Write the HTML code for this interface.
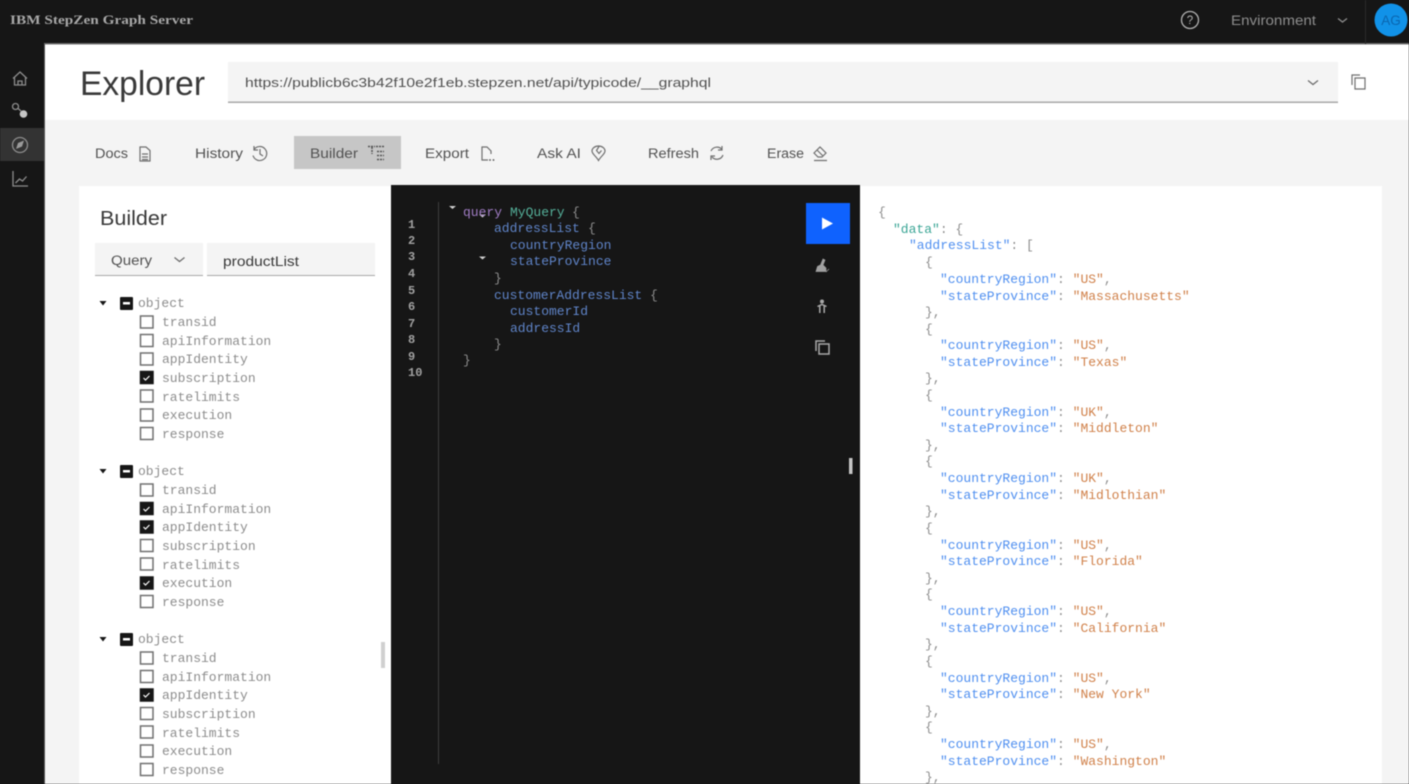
<!DOCTYPE html>
<html><head><meta charset="utf-8"><style>
html,body{margin:0;padding:0;width:1409px;height:784px;overflow:hidden;background:#161616}
svg{display:block;filter:blur(.6px)}
.s{font-family:"Liberation Sans",sans-serif}
.m{font-family:"Liberation Mono",monospace;font-size:13px}
.n{fill:#a0a0a0;font-weight:bold;font-size:12px}
.k{fill:#8d8d8d}
.kw{fill:#a07cc4}.nm{fill:#55b09a}.f{fill:#5f84c8}.b{fill:#8d8d8d}
.jk{fill:#4f8ff0}.js{fill:#d0814a}.jb{fill:#8d8d8d}.jd{fill:#3aa595}
.t{font-size:13.500px;fill:#525252;font-family:"Liberation Sans",sans-serif}
.ic{fill:none;stroke:#6f6f6f;stroke-width:1.200}
.sb{fill:none;stroke:#8d8d8d;stroke-width:1.300}
.ed{fill:none;stroke:#a8a8a8;stroke-width:1.500}
.cb{fill:#fff;stroke:#6f6f6f;stroke-width:1.500}
.cc{fill:#161616;stroke:#161616;stroke-width:1.500}
</style></head><body>
<svg width="1409" height="784" viewBox="0 0 1409 784" xmlns="http://www.w3.org/2000/svg">
<rect width="1409" height="784" fill="#161616"/>
<rect x="45" y="44" width="1364" height="76" fill="#fff"/>
<rect x="45" y="120" width="1364" height="664" fill="#f4f4f4"/>
<rect x="44" y="43" width="1365" height="1.500" fill="#6f6f6f"/>
<rect x="44" y="44" width="1" height="740" fill="#555"/>
<rect x="0" y="128" width="44" height="33" fill="#333"/>
<rect x="1365" y="0" width="1" height="44" fill="#2a2a2a"/>

<text x="10" y="24" font-family="Liberation Serif,serif" font-size="13" font-weight="bold" fill="#a8a8a8" textLength="183" lengthAdjust="spacingAndGlyphs">IBM StepZen Graph Server</text>

<circle cx="1190" cy="20" r="8.500" fill="none" stroke="#b0b0b0" stroke-width="1.300"/>
<text x="1190" y="24" text-anchor="middle" class="s" font-size="11.500" fill="#b0b0b0">?</text>
<text x="1231" y="25" class="s" font-size="13.500" fill="#8d8d8d" textLength="85" lengthAdjust="spacingAndGlyphs">Environment</text>
<path d="M1338 18.500l4.500 3.500 4.500-3.500" fill="none" stroke="#8d8d8d" stroke-width="1.300"/>
<circle cx="1391" cy="20" r="16.500" fill="#1192e8"/>
<text x="1391" y="25" text-anchor="middle" class="s" font-size="13.500" fill="#0a66b0">AG</text>

<!-- sidebar -->
<path class="sb" d="M13 78.500l7-6.500 7 6.500M14.500 77v8h11v-8M18 85v-4h4v4"/>
<circle cx="15.500" cy="106.500" r="3" class="sb"/><path class="sb" d="M18 108.500l3 2.500"/><circle cx="23.500" cy="114" r="3.800" fill="#c6c6c6"/>
<circle cx="20" cy="145" r="7.500" class="sb"/><path d="M16 149l2-6 6-2.500-2 6z" fill="#9a9a9a"/>
<path class="sb" d="M13 171v15h15M15.500 183l4-4 3 2 4-4.500"/>

<!-- title -->
<text x="80" y="95" class="s" font-size="34" fill="#393939" textLength="125" lengthAdjust="spacingAndGlyphs">Explorer</text>
<rect x="228" y="62" width="1110" height="40" fill="#f4f4f4"/>
<rect x="228" y="101.500" width="1110" height="1.500" fill="#a8a8a8"/>
<text x="245" y="87" class="s" font-size="13" fill="#525252" textLength="466" lengthAdjust="spacingAndGlyphs">https://publicb6c3b42f10e2f1eb.stepzen.net/api/typicode/__graphql</text>
<path d="M1308 80.500l5 4 5-4" fill="none" stroke="#6f6f6f" stroke-width="1.300"/>
<path class="ic" d="M1352 85v-10h8M1355 78h10v11h-10z"/>

<!-- toolbar -->
<rect x="294" y="136" width="107" height="33" fill="#c6c6c6"/>
<text x="95" y="158" class="t" textLength="33" lengthAdjust="spacingAndGlyphs">Docs</text>
<path class="ic" stroke-width="1.100" d="M140 147h6l4 3.500v10.500h-10zM142 154h6M142 157h6M142 159.500h6"/>
<text x="195" y="158" class="t" textLength="48" lengthAdjust="spacingAndGlyphs">History</text>
<path class="ic" d="M254 149.500a7 7 0 1 1-1 6M254 146v4h4M260 149v5l3 2"/>
<text x="310" y="158" class="t" textLength="48" lengthAdjust="spacingAndGlyphs">Builder</text>
<path stroke="#525252" stroke-width="1.500" fill="none" stroke-dasharray="2 1" d="M368 146.500h7M372 147v7M376 146.500h8M377 151.500h7M377 155.500h7M377 159.500h7"/>
<text x="425" y="158" class="t" textLength="44" lengthAdjust="spacingAndGlyphs">Export</text>
<path class="ic" d="M488 160h-6v-13h5l4 4v3"/><circle cx="490" cy="160" r=".9" fill="#525252"/><circle cx="493.500" cy="160" r=".9" fill="#525252"/>
<text x="537" y="158" class="t" textLength="44" lengthAdjust="spacingAndGlyphs">Ask AI</text>
<path class="ic" d="M592 151a6.500 5 0 0 1 13 0c0 3-4 5-6.500 9.500c-2.500-4.500-6.500-6.500-6.500-9.500zM599 146.500l-2.500 4 2.500 3 2.500-3"/>
<text x="648" y="158" class="t" textLength="51" lengthAdjust="spacingAndGlyphs">Refresh</text>
<path class="ic" d="M711 151a6.500 6.500 0 0 1 11-1.500M723 155a6.500 6.500 0 0 1-11 2M722 146v4h-4M711 160v-4h4"/>
<text x="767" y="158" class="t" textLength="37" lengthAdjust="spacingAndGlyphs">Erase</text>
<path class="ic" d="M814 153l6-6 6 6-4 4h-4zM817 150l6 6M814 160.500h13"/>

<!-- panels -->
<rect x="79" y="186" width="312" height="598" fill="#fff"/>
<rect x="860" y="186" width="522" height="598" fill="#fff"/>
<rect x="391" y="185" width="469" height="599" fill="#161616"/>

<!-- builder -->
<text x="100" y="225" class="s" font-size="20" fill="#393939" textLength="67" lengthAdjust="spacingAndGlyphs">Builder</text>
<rect x="95" y="243" width="108" height="32" fill="#f4f4f4"/><rect x="95" y="275" width="108" height="1" fill="#a8a8a8"/>
<rect x="207" y="243" width="168" height="32" fill="#f4f4f4"/><rect x="207" y="275" width="168" height="1" fill="#a8a8a8"/>
<text x="111" y="265" class="s" font-size="13.500" fill="#525252" textLength="41" lengthAdjust="spacingAndGlyphs">Query</text>
<path d="M174.500 257.500l5 4 5-4" fill="none" stroke="#6f6f6f" stroke-width="1.300"/>
<text x="223" y="266" class="s" font-size="13.500" fill="#393939" textLength="76" lengthAdjust="spacingAndGlyphs">productList</text>

<g>
<path d="M99.500 301h7l-3.500 4.500z" fill="#161616"/><rect x="120" y="297" width="13" height="13" rx="1" fill="#161616"/><rect x="123" y="302" width="7" height="2.500" fill="#fff"/>
<text x="138" y="307" class="m k">object</text>
<rect x="140.500" y="316" width="12.500" height="12" class="cb"/><text x="162" y="326" class="m k">transid</text>
<rect x="140.500" y="334.500" width="12.500" height="12" class="cb"/><text x="162" y="345" class="m k">apiInformation</text>
<rect x="140.500" y="353" width="12.500" height="12" class="cb"/><text x="162" y="363" class="m k">appIdentity</text>
<rect x="140.500" y="371.500" width="12.500" height="12" class="cc"/><path d="M143.500 378l2 2 4-4" stroke="#fff" stroke-width="1.200" fill="none"/><text x="162" y="382" class="m k">subscription</text>
<rect x="140.500" y="390" width="12.500" height="12" class="cb"/><text x="162" y="401" class="m k">ratelimits</text>
<rect x="140.500" y="409" width="12.500" height="12" class="cb"/><text x="162" y="419" class="m k">execution</text>
<rect x="140.500" y="427.500" width="12.500" height="12" class="cb"/><text x="162" y="438" class="m k">response</text>
</g>
<g>
<path d="M99.500 469h7l-3.500 4.500z" fill="#161616"/><rect x="120" y="465" width="13" height="13" rx="1" fill="#161616"/><rect x="123" y="470" width="7" height="2.500" fill="#fff"/>
<text x="138" y="475" class="m k">object</text>
<rect x="140.500" y="484" width="12.500" height="12" class="cb"/><text x="162" y="494" class="m k">transid</text>
<rect x="140.500" y="502.500" width="12.500" height="12" class="cc"/><path d="M143.500 509l2 2 4-4" stroke="#fff" stroke-width="1.200" fill="none"/><text x="162" y="513" class="m k">apiInformation</text>
<rect x="140.500" y="521" width="12.500" height="12" class="cc"/><path d="M143.500 527l2 2 4-4" stroke="#fff" stroke-width="1.200" fill="none"/><text x="162" y="531" class="m k">appIdentity</text>
<rect x="140.500" y="539.500" width="12.500" height="12" class="cb"/><text x="162" y="550" class="m k">subscription</text>
<rect x="140.500" y="558" width="12.500" height="12" class="cb"/><text x="162" y="569" class="m k">ratelimits</text>
<rect x="140.500" y="577" width="12.500" height="12" class="cc"/><path d="M143.500 583l2 2 4-4" stroke="#fff" stroke-width="1.200" fill="none"/><text x="162" y="587" class="m k">execution</text>
<rect x="140.500" y="595.500" width="12.500" height="12" class="cb"/><text x="162" y="606" class="m k">response</text>
</g>
<g>
<path d="M99.500 637h7l-3.500 4.500z" fill="#161616"/><rect x="120" y="633" width="13" height="13" rx="1" fill="#161616"/><rect x="123" y="638" width="7" height="2.500" fill="#fff"/>
<text x="138" y="643" class="m k">object</text>
<rect x="140.500" y="652" width="12.500" height="12" class="cb"/><text x="162" y="662" class="m k">transid</text>
<rect x="140.500" y="670.500" width="12.500" height="12" class="cb"/><text x="162" y="681" class="m k">apiInformation</text>
<rect x="140.500" y="689" width="12.500" height="12" class="cc"/><path d="M143.500 695l2 2 4-4" stroke="#fff" stroke-width="1.200" fill="none"/><text x="162" y="699" class="m k">appIdentity</text>
<rect x="140.500" y="707.500" width="12.500" height="12" class="cb"/><text x="162" y="718" class="m k">subscription</text>
<rect x="140.500" y="726" width="12.500" height="12" class="cb"/><text x="162" y="737" class="m k">ratelimits</text>
<rect x="140.500" y="745" width="12.500" height="12" class="cb"/><text x="162" y="755" class="m k">execution</text>
<rect x="140.500" y="763.500" width="12.500" height="12" class="cb"/><text x="162" y="774" class="m k">response</text>
</g>
<rect x="381" y="642" width="4" height="26" fill="#d0d0d0"/>

<!-- editor -->
<rect x="438" y="202" width="1" height="562" fill="#3d3d3d"/>
<text x="408" y="228" class="m n">1</text><text x="408" y="244" class="m n">2</text><text x="408" y="260" class="m n">3</text><text x="408" y="277" class="m n">4</text><text x="408" y="294" class="m n">5</text><text x="408" y="310" class="m n">6</text><text x="408" y="327" class="m n">7</text><text x="408" y="343" class="m n">8</text><text x="408" y="360" class="m n">9</text><text x="408" y="376" class="m n">10</text>
<path d="M449 206h7l-3.500 3z" fill="#d0d0d0"/>
<path d="M479 214.500h7l-3.500 3z" fill="#d0d0d0"/>
<path d="M479 256.500h7l-3.500 3z" fill="#d0d0d0"/>
<text x="463" y="216" class="m kw">query</text><text x="510" y="216" class="m nm">MyQuery</text><text x="572" y="216" class="m b">{</text>
<text x="494" y="232" class="m f">addressList</text><text x="588" y="232" class="m b">{</text>
<text x="510" y="249" class="m f">countryRegion</text>
<text x="510" y="265" class="m f">stateProvince</text>
<text x="494" y="282" class="m b">}</text>
<text x="494" y="299" class="m f">customerAddressList</text><text x="650" y="299" class="m b">{</text>
<text x="510" y="315" class="m f">customerId</text>
<text x="510" y="332" class="m f">addressId</text>
<text x="494" y="348" class="m b">}</text>
<text x="463" y="364" class="m b">}</text>

<rect x="806" y="203" width="44" height="41" fill="#0f62fe"/>
<path d="M822 217.500l11 6-11 6z" fill="#fff"/>
<path d="M816 271.500l1.500-5 3-1.500 2.500-6 2 1-2 5 3 3 0 3.500zM826 272l3-3" fill="#a0a0a0" stroke="#a0a0a0" stroke-width=".7"/>
<circle cx="822" cy="301.500" r="2" fill="#a8a8a8"/><path class="ed" d="M817.500 306.500l4.500-2 4.500 2M819.800 306v7M824.200 306v7"/>
<path class="ed" d="M816 351v-10h9M819 344h10v10h-10z"/>
<rect x="849" y="458" width="3.500" height="16" fill="#c6c6c6"/>

<!-- json -->
<g class="m">
<text x="878" y="216" class="jb">{</text>
<text x="893" y="233"><tspan class="jd">"data"</tspan><tspan class="jb">: {</tspan></text>
<text x="909" y="249"><tspan class="jk">"addressList"</tspan><tspan class="jb">: [</tspan></text>
<text x="925" y="266" class="jb">{</text>
<text x="940" y="283"><tspan class="jk">"countryRegion"</tspan><tspan class="jb">: </tspan><tspan class="js">"US"</tspan><tspan class="jb">,</tspan></text>
<text x="940" y="300"><tspan class="jk">"stateProvince"</tspan><tspan class="jb">: </tspan><tspan class="js">"Massachusetts"</tspan></text>
<text x="925" y="316" class="jb">},</text>
<text x="925" y="333" class="jb">{</text>
<text x="940" y="349"><tspan class="jk">"countryRegion"</tspan><tspan class="jb">: </tspan><tspan class="js">"US"</tspan><tspan class="jb">,</tspan></text>
<text x="940" y="366"><tspan class="jk">"stateProvince"</tspan><tspan class="jb">: </tspan><tspan class="js">"Texas"</tspan></text>
<text x="925" y="382" class="jb">},</text>
<text x="925" y="399" class="jb">{</text>
<text x="940" y="416"><tspan class="jk">"countryRegion"</tspan><tspan class="jb">: </tspan><tspan class="js">"UK"</tspan><tspan class="jb">,</tspan></text>
<text x="940" y="432"><tspan class="jk">"stateProvince"</tspan><tspan class="jb">: </tspan><tspan class="js">"Middleton"</tspan></text>
<text x="925" y="449" class="jb">},</text>
<text x="925" y="465" class="jb">{</text>
<text x="940" y="482"><tspan class="jk">"countryRegion"</tspan><tspan class="jb">: </tspan><tspan class="js">"UK"</tspan><tspan class="jb">,</tspan></text>
<text x="940" y="499"><tspan class="jk">"stateProvince"</tspan><tspan class="jb">: </tspan><tspan class="js">"Midlothian"</tspan></text>
<text x="925" y="515" class="jb">},</text>
<text x="925" y="532" class="jb">{</text>
<text x="940" y="549"><tspan class="jk">"countryRegion"</tspan><tspan class="jb">: </tspan><tspan class="js">"US"</tspan><tspan class="jb">,</tspan></text>
<text x="940" y="565"><tspan class="jk">"stateProvince"</tspan><tspan class="jb">: </tspan><tspan class="js">"Florida"</tspan></text>
<text x="925" y="582" class="jb">},</text>
<text x="925" y="598" class="jb">{</text>
<text x="940" y="615"><tspan class="jk">"countryRegion"</tspan><tspan class="jb">: </tspan><tspan class="js">"US"</tspan><tspan class="jb">,</tspan></text>
<text x="940" y="632"><tspan class="jk">"stateProvince"</tspan><tspan class="jb">: </tspan><tspan class="js">"California"</tspan></text>
<text x="925" y="648" class="jb">},</text>
<text x="925" y="665" class="jb">{</text>
<text x="940" y="682"><tspan class="jk">"countryRegion"</tspan><tspan class="jb">: </tspan><tspan class="js">"US"</tspan><tspan class="jb">,</tspan></text>
<text x="940" y="698"><tspan class="jk">"stateProvince"</tspan><tspan class="jb">: </tspan><tspan class="js">"New York"</tspan></text>
<text x="925" y="715" class="jb">},</text>
<text x="925" y="731" class="jb">{</text>
<text x="940" y="748"><tspan class="jk">"countryRegion"</tspan><tspan class="jb">: </tspan><tspan class="js">"US"</tspan><tspan class="jb">,</tspan></text>
<text x="940" y="765"><tspan class="jk">"stateProvince"</tspan><tspan class="jb">: </tspan><tspan class="js">"Washington"</tspan></text>
<text x="925" y="781" class="jb">},</text>
</g>
</svg>
</body></html>
